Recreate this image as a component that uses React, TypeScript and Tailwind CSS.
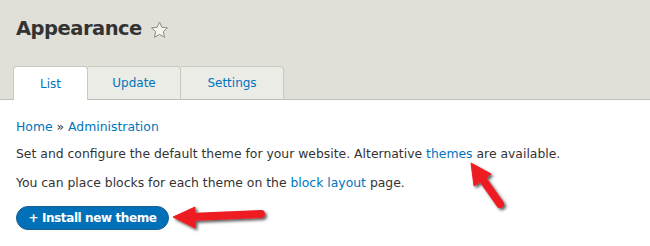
import React from 'react';

const tabs = ['List', 'Update', 'Settings'];

const Arrows: React.FC = () => (
    <svg className="absolute inset-0 pointer-events-none" width="650" height="246" viewBox="0 0 650 246">
        <defs>
            <filter id="shadow" x="-20%" y="-20%" width="140%" height="140%">
                <feDropShadow dx="2" dy="2" stdDeviation="1.4" floodColor="#000" floodOpacity="0.65" />
            </filter>
        </defs>
        <g filter="url(#shadow)" fill="#ec1c24" stroke="#ec1c24">
            <line x1="261" y1="214" x2="190" y2="217" strokeWidth="8" strokeLinecap="round" />
            <polygon points="173,217 195,207 195,228" strokeWidth="1" strokeLinejoin="round" />
            <line x1="500" y1="204" x2="481" y2="177" strokeWidth="8" strokeLinecap="round" />
            <polygon points="471,163 491,174 474,186" strokeWidth="1" strokeLinejoin="round" />
        </g>
    </svg>
);

export default function App() {
    return (
        <div className="relative w-[650px] h-[246px] bg-white overflow-hidden text-[#333] font-['DejaVu_Sans',sans-serif]">
            <div className="bg-[#e0e0d8] pt-[15px]">
                <h1 className="pl-4 flex items-center gap-[7px] text-[19.5px] tracking-[-0.5px] leading-[28px] font-bold text-[#333]">
                    Appearance
                    <svg width="21" height="20" viewBox="0 0 24 24" className="mt-[1px]">
                        <path d="M12 2.5l2.9 6.2 6.7.7-5 4.6 1.4 6.7L12 17.3l-6 3.4 1.4-6.7-5-4.6 6.7-.7z" fill="#f4f4ee" stroke="#8b8b80" strokeWidth="1.2" strokeLinejoin="round" />
                    </svg>
                </h1>
                <div className="mt-[23px] flex pl-[13px] border-b border-[#bfbfba]">
                    {tabs.map((t, i) => (
                        <div
                            key={t}
                            className={`h-[33px] flex items-center justify-center text-[12px] text-[#0074bd] border border-b-0 border-[#c9c9c2] rounded-t-[4px] -mb-px ${i === 0 ? 'w-[75px] bg-white h-[34px]' : i === 1 ? 'w-[93px] bg-[#ececE7] border-l-0 rounded-tl-none' : 'w-[103px] bg-[#ececE7] border-l-0 rounded-tl-none'}`}
                        >
                            {t}
                        </div>
                    ))}
                </div>
            </div>
            <div className="px-4 pt-[18px] text-[12.4px] leading-[18px]">
                <div className="text-[#0074bd]">
                    Home <span className="text-[#333]">»</span> Administration
                </div>
                <p className="mt-[9px]">
                    Set and configure the default theme for your website. Alternative <span className="text-[#0074bd]">themes</span> are available.
                </p>
                <p className="mt-[11px]">
                    You can place blocks for each theme on the <span className="text-[#0074bd]">block layout</span> page.
                </p>
                <button className="mt-[14px] h-[24px] w-[153px] rounded-full bg-[#0071b8] text-white font-bold text-[12px] tracking-[-0.4px] flex items-center justify-center border border-[#1e5c90]">
                    + Install new theme
                </button>
            </div>
            <Arrows />
        </div>
    );
}
